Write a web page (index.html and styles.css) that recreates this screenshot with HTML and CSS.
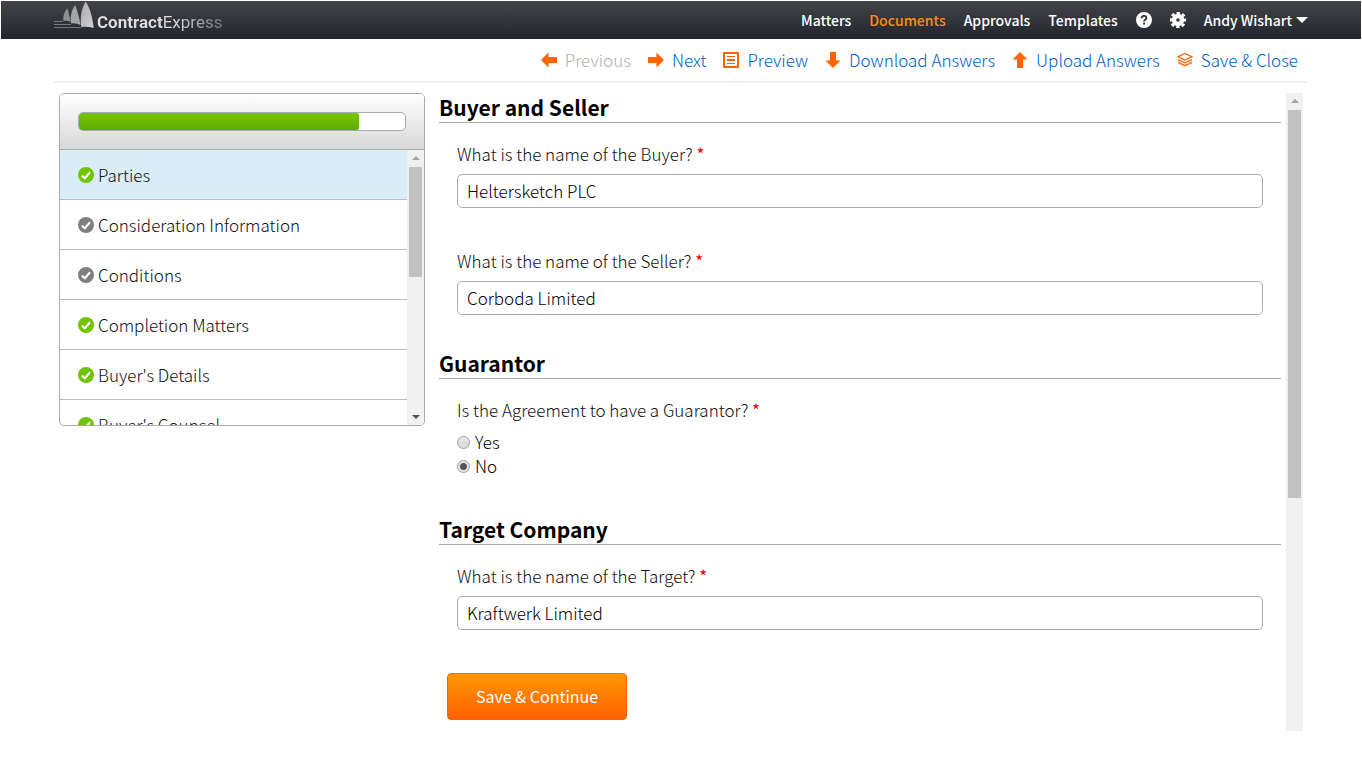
FILE: index.html
```html
<!DOCTYPE html>
<html lang="en">
<head>
<meta charset="utf-8">
<title>ContractExpress</title>
<link rel="stylesheet" href="styles.css">
</head>
<body>
<svg class="sprite" aria-hidden="true">
  <symbol id="tick" viewBox="0 0 16 16"><circle cx="8" cy="8" r="8" fill="currentColor"/><path d="M3.9 8.6 6.9 11.2 12 5.2" fill="none" stroke="#fff" stroke-width="2.1"/></symbol>
  <symbol id="arrow" viewBox="0 0 16 16"><path d="M0 8 7.5 0.5V5H16V11H7.5V15.5Z" fill="currentColor"/></symbol>
</svg>
<header class="topbar">
  <a class="logo" href="#">
    <svg class="logo-mark" viewBox="0 0 40 28" aria-hidden="true">
      <defs><linearGradient id="sail" x1="0" y1="0" x2="1" y2="1"><stop offset="0" stop-color="#aaaaae"/><stop offset="1" stop-color="#d2d2d5"/></linearGradient></defs>
      <path d="M13.3 7.300C10 11 8.700 16 9.500 20Q13 19 16.700 20.700C15.800 16 14.500 11 13.300 7.300Z" fill="#8f9094"/>
      <path d="M21.200 4C17.500 9 16 16 17.200 22.500Q21.500 21.500 26.500 24C25.500 17 23.500 10 21.200 4Z" fill="#a4a5a8"/>
      <path d="M31.700 0.500C27.300 7 25.800 18 27.300 26Q33 25 39.700 27C38.500 16 35.800 7 31.700 0.500Z" fill="url(#sail)"/>
      <path d="M0 20.500H9M0 23.500H17M0 26.500H27" stroke="#77787d" stroke-width="1"/>
    </svg>
    <span class="logo-text"><b>Contract</b>Express</span>
  </a>
  <nav class="nav">
    <a href="#">Matters</a>
    <a class="current" href="#">Documents</a>
    <a href="#">Approvals</a>
    <a href="#">Templates</a>
    <a class="nav-icon" href="#" aria-label="Help"><svg viewBox="0 0 16 16"><circle cx="8" cy="8" r="8" fill="#fff"/><path d="M5.600 6.200Q5.700 3.900 8.100 3.900 10.400 3.900 10.400 6 10.400 7.200 9.200 7.800 8.100 8.400 8.100 9.600" fill="none" stroke="#303239" stroke-width="1.800"/><rect x="7.100" y="10.600" width="2" height="2" fill="#303239"/></svg></a>
    <a class="nav-icon" href="#" aria-label="Settings"><svg viewBox="0 0 16 16"><circle cx="8" cy="8" r="4" fill="none" stroke="#fff" stroke-width="4.400"/><circle cx="8" cy="8" r="7" fill="none" stroke="#fff" stroke-width="3" stroke-dasharray="3.200 2.298" stroke-dashoffset="1.600"/></svg></a>
    <button class="user" type="button">Andy Wishart<svg viewBox="0 0 12 6" aria-hidden="true"><path d="M0 0H12L6 6Z" fill="#fff"/></svg></button>
  </nav>
</header>

<div class="page">
  <div class="actions">
    <button class="action" type="button" disabled><svg viewBox="0 0 16 16"><use href="#arrow"/></svg>Previous</button>
    <button class="action" type="button"><svg class="right" viewBox="0 0 16 16"><use href="#arrow"/></svg>Next</button>
    <button class="action" type="button"><svg viewBox="0 0 16 16"><path d="M1 1H15V15H1Z" fill="none" stroke="currentColor" stroke-width="2"/><path d="M4 4.500H12M4 7.500H12M4 8.500H12M4 11.500H12" stroke="currentColor"/></svg>Preview</button>
    <button class="action" type="button"><svg class="down" viewBox="0 0 16 16"><use href="#arrow"/></svg>Download Answers</button>
    <button class="action" type="button"><svg class="up" viewBox="0 0 16 16"><use href="#arrow"/></svg>Upload Answers</button>
    <button class="action" type="button"><svg viewBox="0 0 16 16"><path d="M8 1.500 15 4.800 8 8.100 1 4.800ZM1 7.600 8 10.900 15 7.600M1 10.400 8 13.700 15 10.400" fill="none" stroke="currentColor" stroke-width="1.300"/></svg>Save &amp; Close</button>
  </div>

  <div class="columns">
    <aside class="sidebar">
      <div class="progress-head"><div class="progress" role="progressbar" aria-label="Progress" aria-valuenow="86"><div class="progress-fill" style="width:86%"></div></div></div>
      <div class="list-wrap">
        <nav class="list">
          <a class="item selected" href="#"><svg class="ok"><use href="#tick"/></svg>Parties</a>
          <a class="item" href="#"><svg><use href="#tick"/></svg>Consideration Information</a>
          <a class="item" href="#"><svg><use href="#tick"/></svg>Conditions</a>
          <a class="item" href="#"><svg class="ok"><use href="#tick"/></svg>Completion Matters</a>
          <a class="item" href="#"><svg class="ok"><use href="#tick"/></svg>Buyer's Details</a>
          <a class="item" href="#"><svg class="ok"><use href="#tick"/></svg>Buyer's Counsel</a>
        </nav>
        <div class="scrollbar" aria-hidden="true"><span class="scroll-up"></span><span class="thumb thumb-list"></span><span class="scroll-down"></span></div>
      </div>
    </aside>

    <main class="main">
      <form class="form">
        <section class="group">
          <h2>Buyer and Seller</h2>
          <div class="field"><label for="buyer">What is the name of the Buyer? <span class="req">*</span></label><input id="buyer" type="text" value="Heltersketch PLC"></div>
          <div class="field"><label for="seller">What is the name of the Seller? <span class="req">*</span></label><input id="seller" type="text" value="Corboda Limited"></div>
        </section>
        <section class="group">
          <h2>Guarantor</h2>
          <fieldset class="field">
            <legend>Is the Agreement to have a Guarantor? <span class="req">*</span></legend>
            <div class="radios">
              <label><input type="radio" name="guarantor">Yes</label>
              <label><input type="radio" name="guarantor" checked>No</label>
            </div>
          </fieldset>
        </section>
        <section class="group">
          <h2>Target Company</h2>
          <div class="field"><label for="target">What is the name of the Target? <span class="req">*</span></label><input id="target" type="text" value="Kraftwerk Limited"></div>
        </section>
        <button class="submit" type="button">Save &amp; Continue</button>
      </form>
      <div class="scrollbar" aria-hidden="true"><span class="scroll-up"></span><span class="thumb thumb-main"></span></div>
    </main>
  </div>
</div>
</body>
</html>
```
FILE: styles.css
```css
* { box-sizing: border-box; }
body {
  margin: 0;
  padding: 1px 1px 0;
  background: #fff;
  color: #111;
  font: 300 17px/24px "Noto Sans CJK SC", "Open Sans", sans-serif;
}
a { color: inherit; text-decoration: none; }
button { font: inherit; border: 0; background: none; padding: 0; cursor: pointer; }
svg { width: 16px; height: 16px; flex: none; }
.sprite { display: none; }

.topbar {
  display: flex;
  justify-content: space-between;
  height: 38px;
  padding: 0 53px;
  background: linear-gradient(#434447, #22252e);
}
.logo { display: flex; align-items: flex-start; gap: 3px; }
.logo-mark { width: 40px; height: 28px; }
.logo-text {
  padding-top: 9px;
  font: 17px/24px Roboto, sans-serif;
  background: linear-gradient(90deg, #dedee0 60%, #77787c);
  background-clip: text;
  color: transparent;
}
.nav { display: flex; align-items: center; gap: 18px; color: #fff; font-size: 14px; font-weight: 500; }
.current { color: #ff8c12; }
.nav-icon { display: flex; }
.user { display: flex; align-items: center; color: #fff; }
.user svg { width: 12px; height: 6px; margin-left: 4px; }

.page { padding: 0 54px 0 53px; }
.actions {
  display: flex;
  justify-content: flex-end;
  gap: 17px;
  height: 44px;
  padding-right: 9px;
  border-bottom: 2px solid #f0f0f0;
}
.action { display: flex; align-items: center; gap: 8px; color: #0060c4; }
.action:disabled { color: #b0b0b0; }
.action svg { color: #ff6400; }
.right { transform: rotate(180deg); }
.down { transform: rotate(270deg); }
.up { transform: rotate(90deg); }

.columns { display: flex; align-items: flex-start; gap: 14px; padding: 10px 4px 0 5px; }
.sidebar { flex: 0 0 366px; border: 1px solid #aaa; border-radius: 5px; overflow: hidden; }
.progress-head { padding: 18px; border-bottom: 1px solid #aaa; background: linear-gradient(#fff, #d8d8da); }
.progress { height: 19px; border: 1px solid #aaa; border-radius: 5px; background: #fff; }
.progress-fill { height: 17px; border-radius: 4px 2px 2px 4px; background: linear-gradient(#76c800, #62ab00); }
.list-wrap { display: flex; height: 275px; }
.list { flex: 1; overflow: hidden; }
.item {
  display: flex;
  align-items: center;
  gap: 4px;
  height: 50px;
  padding-left: 18px;
  border-bottom: 1px solid #bbb;
}
.item svg { color: #808080; }
.item .ok { color: #70c400; }
.selected { background: #d9edf7; }

.scrollbar { display: flex; flex-direction: column; flex: 0 0 17px; padding: 6px 2px; background: #f0f0f0; }
.scroll-up, .scroll-down { align-self: center; border: 4px solid transparent; }
.scroll-up { border-top: 0; border-bottom: 4px solid #a3a3a3; margin-bottom: 7px; }
.scroll-down { border-bottom: 0; border-top: 4px solid #505050; margin-top: auto; }
.thumb { background: #c1c1c1; }
.thumb-list { height: 110px; }
.thumb-main { height: 62%; }

.main { flex: 1; display: flex; gap: 5px; }
.form { flex: 1; padding-bottom: 11px; }
.group { margin-bottom: 34px; }
h2 {
  height: 30px;
  margin: 0;
  border-bottom: 1px solid #aaa;
  color: #000;
  font-size: 21px;
  line-height: 29px;
}
.field { display: flex; flex-direction: column; gap: 8px; margin: 19px 18px 0; padding: 0; border: 0; }
.field + .field { margin-top: 41px; }
.req { color: #e80000; font-weight: 400; }
legend { padding: 0; }
input[type="text"] {
  width: 100%;
  height: 34px;
  padding: 0 9px 2px;
  border: 1px solid #aaa;
  border-radius: 5px;
  background: #fff;
  color: #000;
  font: inherit;
}
.radios { display: flex; flex-direction: column; padding: 8px 0 3px; color: #000; }
.radios label { display: flex; align-items: center; gap: 5px; }
input[type="radio"] {
  appearance: none;
  width: 13px;
  height: 13px;
  margin: 0;
  border: 1px solid #a0a0a0;
  border-radius: 50%;
  background: linear-gradient(#e8e8e8, #d8d8d8);
}
input[type="radio"]:checked { background: radial-gradient(circle, #555 0 3px, #e4e4e4 4px); }
.submit {
  height: 47px;
  margin: 9px 0 0 8px;
  padding: 0 28px 2px;
  border: 1px solid #ff6400;
  border-radius: 4px;
  background: linear-gradient(#ff9800, #ff6000);
  color: #fff;
  font-size: 16px;
  font-weight: 400;
}
```
